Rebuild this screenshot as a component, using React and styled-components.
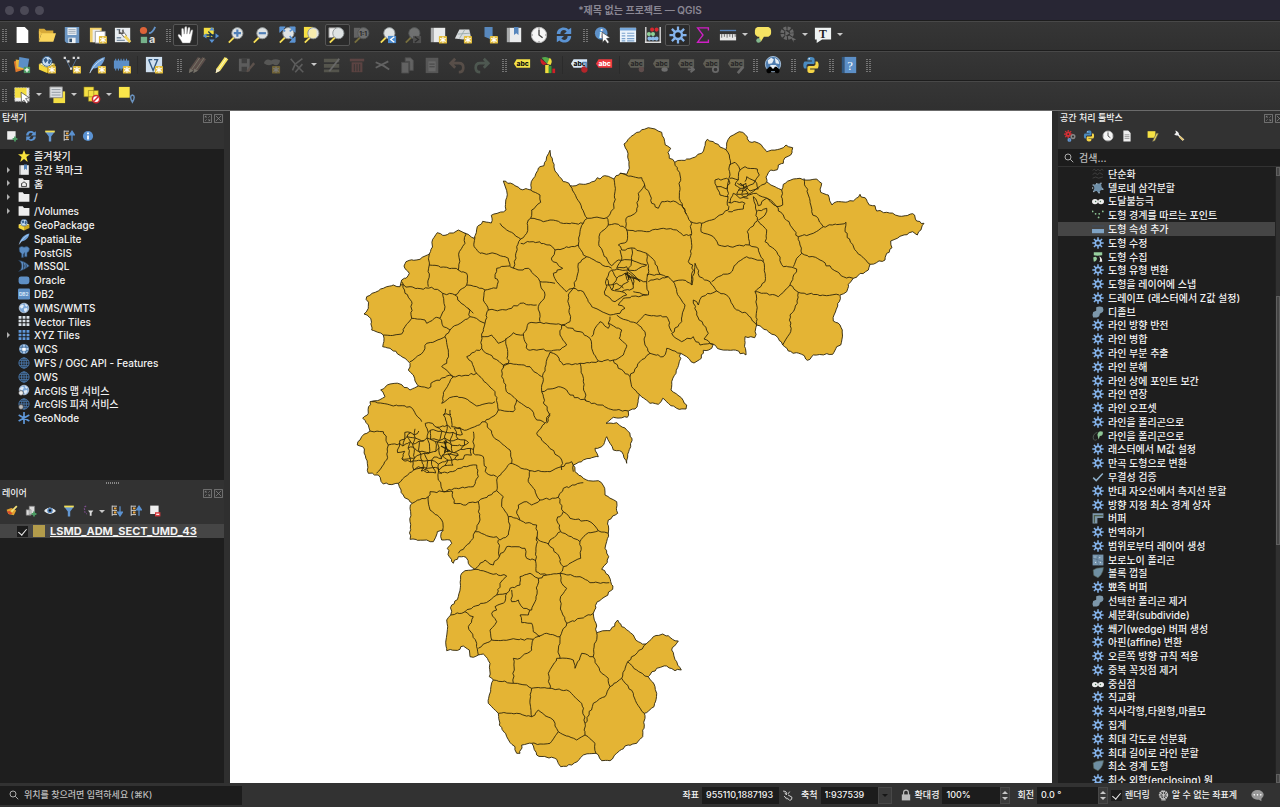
import React, { useState } from "react";
import styled, { createGlobalStyle } from "styled-components";

const GlobalStyle = createGlobalStyle`
  * {
    box-sizing: border-box;
  }

  body {
    margin: 0;
    background: #323232;
    color: #f2f2f2;
    font-family: Inter, "Noto Sans CJK KR", sans-serif;
    font-size: 10px;
    font-weight: 500;
    line-height: 14px;
    overflow: hidden;
  }

  button, input, select {
    font: inherit;
    color: inherit;
  }

  ul {
    list-style: none;
    margin: 0;
    padding: 0;
  }
`;

/* ---------- icons ---------- */

const Badge = ({ x = 11, y = 11 }) => (
  <g transform={`translate(${x} ${y})`}>
    <rect width="9" height="8.5" rx="1" fill="#e3bd3c" />
    <path
      d="M4.5 1v6.5M1.5 2.5l6 3.6M7.5 2.5l-6 3.6"
      stroke="#fff"
      strokeWidth="1.3"
    />
  </g>
);

const Lens = ({ children }) => (
  <>
    <path d="M2 18.5l6-6" stroke="#222" strokeWidth="3.4" />
    <path d="M2 18.5l6-6" stroke="#f3dc58" strokeWidth="2.2" />
    <circle cx="11.5" cy="8" r="6.2" fill="#dfe3e4" stroke="#8b9294" />
    {children}
  </>
);

const Tag = ({ fill, ink = "#111", children }) => (
  <>
    <path d="M1 8.5l3-5h15v9.500H4z" fill={fill} />
    <text
      x="4"
      y="11"
      fontSize="7.500"
      fontWeight="800"
      fontFamily="Inter, sans-serif"
      fill={ink}
    >
      abc
    </text>
    {children}
  </>
);

const Globe = ({ fill = "#7fa9d8", line = "#dfeaf6" }) => (
  <>
    <circle cx="10" cy="10" r="8" fill={fill} stroke={line} />
    <path
      d="M3 7l4-3 3 2-2 4-3 1zM12 3l4 3-2 2-2-2zM10 11l5-1 1 3-4 4-2-3z"
      fill={line}
    />
  </>
);

const WireGlobe = () => (
  <g fill="none" stroke="#4b79ae" strokeWidth="1.5">
    <circle cx="10" cy="10" r="8.5" />
    <ellipse cx="10" cy="10" rx="4" ry="8.5" />
    <path d="M10 1.500v17M1.500 10h17M3 5.500h14M3 14.500h14" />
  </g>
);

const Gear = ({ color = "#85b4ec" }) => (
  <g stroke={color} fill="none">
    <path
      d="M10 .5v19M.5 10h19M3.200 3.200l13.600 13.600M16.800 3.200L3.200 16.800"
      strokeWidth="2.500"
    />
    <circle cx="10" cy="10" r="4.400" strokeWidth="2.600" fill="#1e1e1e" />
  </g>
);

const Refresh = () => (
  <g fill="#5b93d3">
    <path d="M2 9C2 1 12 0 15 4l3-2v7h-8l3-3C10 3 6 5 6 9z" />
    <path d="M18 11c0 8-10 9-13 5l-3 2v-7h8l-3 3c3 3 7 1 7-3z" />
  </g>
);

const Funnel = () => (
  <>
    <path d="M2 3h16l-6 8v8H8v-8z" fill="#6397d2" />
    <path d="M2 1h16v3H2z" fill="#f1df58" />
  </>
);

const Python = () => (
  <>
    <path
      d="M10 1C6 1 6 2.500 6 5h5v1H3C1 7 1 13 3 14h2v-3c0-1 1-2 2-2h5c2 0 2-1 2-2V4c0-2-1-3-4-3z"
      fill="#4b8bc0"
    />
    <path
      d="M10 19c4 0 4-1.500 4-4H9v-1h8c2-1 2-7 0-8h-2v3c0 1-1 2-2 2H8c-2 0-2 1-2 2v3c0 2 1 3 4 3z"
      fill="#f5d547"
    />
    <circle cx="8" cy="3" r=".8" fill="#fff" />
  </>
);

const Pencil = ({ color = "#f6e45f" }) => (
  <>
    <path d="M4 14L13 1l4 2.500-9 13L3 19z" fill={color} />
    <path d="M6 15L15 2" stroke="#fffbd0" />
    <path d="M4 14l4 2.500L3 19z" fill="#f1ead0" />
  </>
);

const Cursor = () => (
  <path
    d="M9 7l9 6-4 1 3 4-2 1.500-3-4-2.500 3z"
    fill="#fff"
    stroke="#333"
    strokeWidth=".7"
  />
);

const Book = () => (
  <>
    <path d="M2 2h3v16H2z" fill="#a9abac" />
    <path d="M5 2h13v16H5z" fill="#e9ebec" />
  </>
);

const ListArrows = ({ up }) => (
  <>
    <path d="M2 2h8M2 9h8M2 16h8M2 1v17" stroke="#ddd" strokeWidth="1.500" />
    <path d="M5 4h4v3H5zM5 11h4v3H5z" fill="#eda73f" />
    <path
      d={up ? "M15 18V5M11 8l4-6 4 6z" : "M15 2v13M11 12l4 6 4-6z"}
      stroke="#5b93d3"
      strokeWidth="2"
      fill="#5b93d3"
    />
  </>
);

const Box = () => (
  <>
    <path d="M1 9l9-3 9 3-9 4z" fill="#fff0a0" />
    <path d="M1 9l9 4v6l-9-4z" fill="#f4d83e" />
    <path d="M19 9l-9 4v6l9-4z" fill="#c9a51c" />
    <circle cx="10" cy="6" r="5.500" fill="#c9def2" stroke="#37618f" />
    <path d="M6 4l3-2 2 3-3 3zM12 3l3 2-2 4-2-1z" fill="#37618f" />
  </>
);

const Feather = () => (
  <>
    <path d="M2 18C5 8 10 3 19 1c-1 7-6 12-13 13z" fill="#6ea0d8" />
    <path d="M2 19C6 11 11 6 17 3" stroke="#d6e6f7" fill="none" />
  </>
);

const Grid = ({ color }) => (
  <path
    d="M1 4h18M1 10h18M1 16h18"
    stroke={color}
    strokeWidth="4.500"
    strokeDasharray="4.800 1.800"
  />
);

const icons = {
  newProject: <path d="M4 1h9l4 4v14H4z" fill="#fff" />,
  open: (
    <>
      <path d="M1 3h6l2 2h8v4H1z" fill="#d8ab3a" />
      <path d="M1 17L4 8h16l-3 9.500H1z" fill="#fbd65d" />
      <path d="M1 5v12l3-9z" fill="#f1c54c" />
    </>
  ),
  save: (
    <>
      <path d="M2 1h16v18H4l-2-2z" fill="#6c96c2" />
      <path d="M5 2h10v8H5z" fill="#e8eef3" />
      <path d="M6 4h8M6 6h8M6 8h8" stroke="#98a6b3" />
      <path d="M6 13h8v6H6z" fill="#edf1f4" />
      <path d="M7 14h3v4H7z" fill="#34516f" />
    </>
  ),
  layout: (
    <>
      <path d="M1 2h13v5H6v11H1z" fill="#f0cf68" />
      <path d="M4 4h8v14H4z" fill="#eee" />
      <path d="M7 6h11v13H7z" fill="#fff" stroke="#999" />
      <Badge />
    </>
  ),
  layoutManager: (
    <>
      <path d="M1 2h17v16H1z" fill="#e9edf0" />
      <path d="M3 4h4M3 16h9M3 13h5" stroke="#7d91a4" strokeWidth="1.500" />
      <path d="M8 6l5 6" stroke="#555" strokeWidth="4" />
      <path d="M8 6l5 6" stroke="#fff" strokeWidth="2.500" />
      <path d="M12 11l6 7" stroke="#f1d35b" strokeWidth="3" />
      <path d="M6 4v4h4V4" stroke="#555" fill="none" strokeWidth="1.500" />
    </>
  ),
  style: (
    <>
      <circle cx="5" cy="5" r="4" fill="#dd6339" />
      <path d="M11 8q4 0 7-7" stroke="#6493c8" strokeWidth="2" fill="none" />
      <path d="M2 12h7v7H2z" fill="#76b28b" />
      <text
        x="11"
        y="19"
        fontSize="12"
        fontWeight="700"
        fontFamily="Inter, sans-serif"
        fill="#ddd"
      >
        a
      </text>
    </>
  ),
  hand: (
    <path
      d="M6 19c-1-3-5-7-5-9 1-2 3 0 4 2V4c0-2 2-2 2.500 0l.5 5 .5-7c.5-2 2.500-2 2.500 0v7l1-6c.5-2 2.500-2 2.500 0L14 9l1.500-4c1-1.500 2.500-1 2 1L16 14c0 2-1 3-1.500 5z"
      fill="#fff"
      stroke="#777"
      strokeWidth=".5"
    />
  ),
  panSelect: (
    <>
      <path d="M2 2h11v10H2z" fill="#f4df43" />
      <path
        d="M7 6l8 8M9 9v9M3 10h15"
        stroke="#19334f"
        strokeWidth="1.500"
      />
      <path
        d="M11 1l3 4H8zM11 19l3-4H8zM1 11l4-3v6zM19 11l-4-3v6z"
        fill="#5b93d3"
      />
    </>
  ),
  zoomIn: (
    <Lens>
      <path d="M7.500 8h8M11.500 4v8" stroke="#4f7fb7" strokeWidth="2.400" />
    </Lens>
  ),
  zoomOut: (
    <Lens>
      <path d="M7.500 8h8" stroke="#4f7fb7" strokeWidth="2.400" />
    </Lens>
  ),
  zoomFull: (
    <Lens>
      <path
        d="M2 1h6L2 7zM19 1h-6l6 6zM19 18h-6l6-6z"
        fill="#5b93d3"
        stroke="#5b93d3"
      />
      <path
        d="M4 3l4 3M17 3l-4 3M17 16l-4-5"
        stroke="#5b93d3"
        strokeWidth="1.800"
      />
    </Lens>
  ),
  zoomSelection: (
    <>
      <path d="M1 1h10v12H1z" fill="#f7df42" />
      <Lens>
        <path d="M7 5q4-4 8 0v7q-4 3-8 0z" fill="#f6ecae" />
      </Lens>
    </>
  ),
  zoomLayer: (
    <>
      <path d="M1 2h10v11H1z" fill="#eee" stroke="#888" />
      <Lens />
    </>
  ),
  zoomNative: (
    <>
      <path d="M1 2h7v11H1z" fill="#bbb" />
      <Lens>
        <text
          x="7"
          y="11"
          fontSize="7"
          fontWeight="800"
          fontFamily="Inter, sans-serif"
          fill="#222"
        >
          1:1
        </text>
      </Lens>
    </>
  ),
  zoomLast: (
    <Lens>
      <path d="M10 11h9v8h-9z" fill="#4a8bd0" />
      <path d="M17 12l-4 3 4 3" stroke="#fff" strokeWidth="1.500" fill="none" />
    </Lens>
  ),
  zoomNext: (
    <Lens>
      <path d="M10 11h9v8h-9z" fill="#888" />
      <path d="M12 12l4 3-4 3" stroke="#222" strokeWidth="1.500" fill="none" />
    </Lens>
  ),
  newMap: (
    <>
      <Book />
      <Badge />
    </>
  ),
  new3d: (
    <>
      <path d="M1 14L6 4h11l2 9-9 2z" fill="#dadddf" />
      <path d="M4 9l14-1M6 14l6-10" stroke="#9aa" />
      <Badge />
    </>
  ),
  newBookmark: (
    <>
      <path d="M5 1h9v16l-4-3-5-2z" fill="#5888bd" />
      <Badge />
    </>
  ),
  bookmarks: (
    <>
      <Book />
      <path d="M10 1h5v9l-2.500-2L10 10z" fill="#5686bc" />
    </>
  ),
  clock: (
    <>
      <circle cx="10" cy="10" r="8.500" fill="#f6f6f6" stroke="#bbb" />
      <path d="M10 4v6l4 3" stroke="#444" strokeWidth="1.500" fill="none" />
      <path d="M10 2v1M10 17v1M2 10h1M17 10h1" stroke="#333" />
    </>
  ),
  refresh: <Refresh />,
  identify: (
    <>
      <circle cx="8" cy="8" r="7" fill="#5e91c9" />
      <text
        x="5.500"
        y="13"
        fontSize="14"
        fontStyle="italic"
        fontWeight="700"
        fontFamily="Liberation Serif, serif"
        fill="#fff"
      >
        i
      </text>
      <Cursor />
    </>
  ),
  table: (
    <>
      <path d="M1 2h18v16H1z" fill="#eaf3fb" />
      <path d="M1 2h18v3H1z" fill="#78a9dc" />
      <path
        d="M3 8h4M9 8h8M3 11h4M9 11h8M3 14h4M9 14h8M3 16.500h4M9 16.500h8"
        stroke="#7ba3cd"
        strokeWidth="1.200"
      />
    </>
  ),
  abacus: (
    <>
      <path d="M2 1v17M18 1v17M1 18h18" stroke="#ddd" strokeWidth="1.500" />
      <g strokeWidth="4.500" strokeLinecap="round">
        <path d="M9 4h0M14 4h0" stroke="#d7282f" />
        <path d="M5.500 9h0M10 9h0" stroke="#8fd097" />
        <path d="M6 14h0M10 14h0M14 14h0" stroke="#8ab8e8" />
      </g>
    </>
  ),
  gear: <Gear />,
  sigma: (
    <path
      d="M16 5V2H4l6 8-6 8h12v-3"
      stroke="#cf1fc5"
      strokeWidth="1.500"
      fill="none"
    />
  ),
  ruler: (
    <>
      <path d="M1 5h18" stroke="#5480b8" strokeWidth="1.500" />
      <path d="M1 9h18v7H1z" fill="#e7e7e7" />
      <path
        d="M3 9v4M6 9v3M9 9v4M12 9v3M15 9v4M18 9v3"
        stroke="#555"
        strokeWidth=".9"
      />
    </>
  ),
  tips: (
    <>
      <path
        d="M4 1h12q3 1 3 4v3q0 3-3 4h-5l-3 5-3 1 1-6H4Q1 11 1 8V5q0-3 3-4z"
        fill="#f6e363"
      />
      <circle cx="5" cy="16" r="2.500" fill="#83b98e" />
    </>
  ),
  action: (
    <>
      <circle
        cx="9"
        cy="8"
        r="5.500"
        fill="none"
        stroke="#ccc"
        strokeWidth="4"
        strokeDasharray="3 1.300"
      />
      <path d="M7 5l5 3-5 3z" fill="#ccc" />
      <path d="M12 11l7 4-3 1 1 3z" fill="#ccc" />
    </>
  ),
  annotation: (
    <>
      <path d="M1 2h18v13H9l-6 4v-4H1z" fill="#eef2f2" />
      <text
        x="5.500"
        y="13"
        fontSize="13"
        fontWeight="700"
        fontFamily="Liberation Serif, serif"
        fill="#222"
      >
        T
      </text>
    </>
  ),
  dataSource: (
    <>
      <path d="M1 6l8-2 3 11-9 3z" fill="#e0792e" />
      <path d="M3 4l8 1 1 10-8-1z" fill="#e9b93c" />
      <path d="M7 1l11 2-2 12-10-3z" fill="#5c8fc7" />
      <path d="M12 12h7v7h-7z" fill="#4c9a63" />
      <path d="M15.500 13v5M13 15.500h5" stroke="#fff" strokeWidth="1.400" />
    </>
  ),
  newGpkg: (
    <>
      <Box />
      <Badge />
    </>
  ),
  newShape: (
    <>
      <path d="M3 3l6 12 6-12" stroke="#56749a" fill="none" />
      <path
        d="M2 2h0M6 6h0M9 14h0M17 2h0M12 2h0"
        stroke="#ddd"
        strokeWidth="2.500"
        strokeLinecap="square"
      />
      <Badge />
    </>
  ),
  newSpatialite: (
    <>
      <Feather />
      <Badge />
    </>
  ),
  memory: (
    <>
      <path d="M1 5h17v9H1z" fill="#5c8fc7" />
      <path
        d="M3 3v13M6 3v13M9 3v13M12 3v13M15 3v13"
        stroke="#5c8fc7"
        strokeWidth="1.200"
      />
      <Badge />
    </>
  ),
  virtual: (
    <>
      <path d="M1 1h18v17H1z" fill="#cfe0f0" />
      <path
        d="M4 4l5 12 5-12h-4M4 4h4"
        stroke="#31587f"
        strokeWidth="1.500"
        fill="none"
      />
      <Badge />
    </>
  ),
  edits: (
    <>
      <g transform="translate(-2 0)">
        <Pencil color="#a98276" />
      </g>
      <g transform="translate(3 0)">
        <Pencil color="#a98276" />
      </g>
    </>
  ),
  pencil: <Pencil />,
  saveEdits: (
    <>
      <path d="M1 3h12v14H1z" fill="#aaa" />
      <path d="M4 3h6v5H4zM4 12h6v5H4z" fill="#555" />
      <path d="M9 17l8-10 2 2-8 9z" fill="#a8897a" />
    </>
  ),
  addPolygon: (
    <>
      <path d="M1 8q2-6 8-3 5-3 10 0-2 8-8 4-5 3-10-1z" fill="#9a9a95" />
      <Badge x={10} y={11} />
    </>
  ),
  vertex: (
    <path
      d="M3 3l5 6-3 7M8 9l8-6M9 10l8 8M16 9l-8 9"
      stroke="#aaa"
      strokeWidth="1.800"
      fill="none"
    />
  ),
  multiEdit: (
    <>
      <path d="M1 3h17v4H1zM1 9h17v4H1zM1 15h17v3H1z" fill="#95957d" />
      <path d="M7 17L18 3" stroke="#ccc" strokeWidth="2" />
    </>
  ),
  trash: (
    <>
      <path d="M2 3h16v3H2z" fill="#a7635f" />
      <path d="M4 7v11h12V7" fill="#a7635f" />
      <path d="M7 9v8M10 9v8M13 9v8" stroke="#333" />
    </>
  ),
  cut: (
    <path
      d="M3 13l14-7M3 7l9 4 6 4"
      stroke="#bbb"
      strokeWidth="2"
      fill="none"
    />
  ),
  copy: (
    <path d="M4 7h8v12H4zM8 2h6l3 3v11h-4V6H8z" fill="#bbb" stroke="#777" />
  ),
  paste: (
    <>
      <path d="M3 2h14v17H3z" fill="#999" />
      <path d="M6 6h8v11H6z" fill="#ccc" />
      <path d="M7 9h6M7 12h6" stroke="#555" />
    </>
  ),
  undo: (
    <path
      d="M3 8h9q5 0 5 5t-5 5M8 3L3 8l5 5"
      stroke="#9c8070"
      strokeWidth="3"
      fill="none"
    />
  ),
  redo: (
    <path
      d="M17 8H8q-5 0-5 5t5 5M12 3l5 5-5 5"
      stroke="#7f9b87"
      strokeWidth="3"
      fill="none"
    />
  ),
  label: <Tag fill="#f4e248" />,
  diagram: (
    <>
      <path d="M4 2q5-2 9 1l-3 6z" fill="#55a94a" />
      <path d="M3 3l7 6-4 1q-4-2-3-7z" fill="#cf2027" />
      <path d="M13 2q4 3 1 8l-4-1z" fill="#f0dd3d" />
      <path d="M8 10h4v9H8z" fill="#f0dd3d" />
      <path d="M12 11h3v8h-3z" fill="#38963a" />
      <path d="M16 14h3v5h-3z" fill="#cf2027" />
    </>
  ),
  pinLabel: (
    <Tag fill="#d9e9f8">
      <circle cx="16" cy="15" r="3.500" fill="#b4252a" />
      <path d="M14 7h4v6" stroke="#4f7fb7" fill="none" strokeWidth="1.500" />
    </Tag>
  ),
  redLabel: <Tag fill="#ee3b40" ink="#fff" />,
  labelPin: (
    <Tag fill="#b0ae98">
      <circle cx="16" cy="15" r="3" fill="#b3807c" />
    </Tag>
  ),
  labelShow: (
    <Tag fill="#b0ae98">
      <ellipse cx="14" cy="15" rx="3.500" ry="2.500" fill="#ddd" />
    </Tag>
  ),
  labelMove: (
    <Tag fill="#b0ae98">
      <path d="M12 15h6M15 12l4 3-4 3" stroke="#ccc" strokeWidth="2" />
    </Tag>
  ),
  labelRotate: (
    <Tag fill="#b0ae98">
      <circle cx="15" cy="15" r="3" fill="none" stroke="#ccc" strokeWidth="2" />
    </Tag>
  ),
  labelEdit: (
    <Tag fill="#b0ae98">
      <path d="M12 19l6-7" stroke="#ccc" strokeWidth="3" />
    </Tag>
  ),
  metasearch: (
    <>
      <circle cx="10" cy="9" r="8.500" fill="#4f7db0" stroke="#a9c5e0" />
      <path
        d="M4 5l4-3 3 2-2 4-4 1zM12 2l4 3 1 4-4-1zM7 10l6 0 3 3-4 2-5-1z"
        fill="#e6eef6"
      />
      <path
        d="M4 19a3 3 0 0 1 0-5l2-2h2l1 2h2l1-2h2l2 2a3 3 0 0 1 0 5q-4 1-4-2h-4q0 3-4 2z"
        fill="#000"
      />
    </>
  ),
  python: <Python />,
  help: (
    <>
      <path d="M2 1h3v18H2z" fill="#31577f" />
      <path d="M5 1h13v18H5z" fill="#5c8fc7" />
      <text
        x="8"
        y="15"
        fontSize="14"
        fontFamily="Liberation Serif, serif"
        fill="#fff"
      >
        ?
      </text>
    </>
  ),
  select: (
    <>
      <path
        d="M2 2h16v15H2z"
        fill="#eee"
        stroke="#aaa"
        strokeDasharray="2 1"
      />
      <path d="M2 2h13v11H2z" fill="#f4df43" />
      <Cursor />
    </>
  ),
  selectValue: (
    <>
      <path d="M6 6h13v13H6z" fill="#f4df43" />
      <path d="M2 1h14v12H2z" fill="#dcdfe2" stroke="#888" />
      <path d="M4 4h10M4 7h10M4 10h10" stroke="#8b949d" />
    </>
  ),
  deselect: (
    <>
      <path
        d="M1 1h11v11H1zM6 5h11v12H6z"
        fill="#f4df43"
        stroke="#80711a"
        strokeWidth=".6"
      />
      <circle
        cx="14.500"
        cy="14.500"
        r="4"
        fill="#fff"
        stroke="#d12b33"
        strokeWidth="1.700"
      />
      <path d="M12 17l5-5" stroke="#d12b33" strokeWidth="1.700" />
    </>
  ),
  selectPlace: (
    <>
      <path d="M1 1h12v12H1z" fill="#f9e54a" />
      <path
        d="M16 18q-4-7 0-8 4 1 0 8z"
        fill="none"
        stroke="#6b93bf"
        strokeWidth="1.600"
      />
    </>
  ),
  addPanel: (
    <>
      <path d="M2 2h14v14H2z" fill="#eee" />
      <path d="M11 15h8M15 11v8" stroke="#4c9a63" strokeWidth="3" />
    </>
  ),
  funnel: <Funnel />,
  collapse: <ListArrows up />,
  expand: <ListArrows />,
  info: (
    <>
      <circle cx="10" cy="10" r="8.500" fill="#5b93d3" />
      <path d="M10 4v3M10 9v7" stroke="#fff" strokeWidth="3" />
    </>
  ),
  star: (
    <path
      d="M10 0l2.800 7H20l-6 4.800L16.200 20 10 15.200 3.800 20 6 11.800 0 7h7.200z"
      fill="#f8e23c"
    />
  ),
  home: (
    <>
      <path d="M1 2h7l2 3h9v13H1z" fill="#eee" />
      <path
        d="M5 12l5-4 5 4h-1v4H6v-4z"
        fill="none"
        stroke="#333"
        strokeWidth="1.500"
      />
    </>
  ),
  folder: <path d="M1 2h7l2 3h9v13H1z" fill="#eee" />,
  geopackage: <Box />,
  feather: <Feather />,
  postgis: (
    <path
      d="M2 3q4-4 8-1 6-3 9 2 0 6-4 7v7h-4v-7l-2 3v5H6v-6Q1 10 2 3z"
      fill="#5b8cc2"
      stroke="#2c4a6c"
    />
  ),
  mssql: (
    <path
      d="M1 1q5 2 5 9t-5 9q9-2 18-9Q12 2 1 1zM9 4q3 6 0 12M13 6q2 4 0 8"
      fill="#5b8cc2"
      stroke="#28405c"
    />
  ),
  oracle: <rect x="1" y="4" width="18" height="13" rx="4" fill="#5e8fc5" />,
  db2: (
    <>
      <rect y="1" width="20" height="18" rx="2" fill="#5e8fc5" />
      <text
        x="1.500"
        y="13"
        fontSize="8"
        fontWeight="700"
        fontFamily="Inter, sans-serif"
        fill="#dbe9f8"
      >
        DB2
      </text>
    </>
  ),
  globe: <Globe />,
  wcs: (
    <>
      <circle cx="10" cy="10" r="8" fill="#a9c9ec" />
      <path
        d="M2 7h16M2 13h16M7 2v16M13 2v16"
        stroke="#37618f"
        strokeWidth="1.500"
      />
      <path d="M7 8h6v5H7z" fill="#fff" />
    </>
  ),
  wire: <WireGlobe />,
  vectorTiles: <Grid color="#d9e0e6" />,
  xyz: <Grid color="#5f98da" />,
  arcMap: (
    <>
      <Globe />
      <circle cx="5" cy="15" r="4" fill="#eee" stroke="#333" />
    </>
  ),
  arcFeature: (
    <>
      <WireGlobe />
      <circle cx="5" cy="15" r="4" fill="#bbb" stroke="#333" />
    </>
  ),
  geonode: (
    <path
      d="M10 1v18M2 5.500l16 9M18 5.500l-16 9"
      stroke="#5f98da"
      strokeWidth="2.800"
      strokeLinecap="round"
    />
  ),
  brush: (
    <>
      <path d="M1 8l8-3 8 4-4 8-9-2z" fill="#e4a22f" />
      <path d="M1 11l5 5 5-2-5-4z" fill="#d94c2c" />
      <path d="M9 11l9-9" stroke="#f5e27b" strokeWidth="3" />
    </>
  ),
  group: (
    <>
      <path d="M2 8h8v9H2zM7 2h9v14H7z" fill="#ddd" stroke="#777" />
      <path d="M11 15h8M15 11v8" stroke="#4c9a63" strokeWidth="3" />
    </>
  ),
  eye: (
    <>
      <path d="M0 10q9-12 20 0-10 10-20 0z" fill="#e7ecef" />
      <circle cx="10" cy="9" r="4.500" fill="#4f7fb7" />
      <circle cx="10" cy="9" r="2" fill="#111" />
    </>
  ),
  expression: (
    <>
      <path
        d="M7 2Q2 3 5 9q-2 2 3 6"
        stroke="#7b4c8c"
        strokeWidth="2"
        fill="none"
        strokeDasharray="3 2"
      />
      <path d="M10 9h9l-3 4v5h-3v-5z" fill="#ddd" />
    </>
  ),
  removeLayer: (
    <>
      <path d="M2 1h14v14H2z" fill="#eee" />
      <path d="M10 12h9v7h-9z" fill="#d7393e" />
      <path d="M12 15.500h5" stroke="#fff" strokeWidth="2" />
    </>
  ),
  models: (
    <>
      <g stroke="#d72f35" fill="none">
        <circle cx="7" cy="7" r="3" strokeWidth="3" />
        <path
          d="M7 0v3M7 11v3M0 7h3M11 7h3M2 2l2 2M12 2l-2 2M2 12l2-2"
          strokeWidth="2"
        />
      </g>
      <circle
        cx="15"
        cy="11"
        r="3"
        fill="none"
        stroke="#888"
        strokeWidth="2.500"
      />
      <circle
        cx="9"
        cy="16.500"
        r="2"
        fill="none"
        stroke="#6397d2"
        strokeWidth="2.500"
      />
    </>
  ),
  page: (
    <>
      <path d="M4 1h8l4 4v14H4z" fill="#eee" />
      <path d="M6 8h8M6 11h8M6 14h8" stroke="#666" />
    </>
  ),
  editInPlace: (
    <>
      <path d="M1 2h13v11H1z" fill="#f6e245" />
      <path d="M9 19l7-14 3 1-6 12z" fill="#e9d45a" stroke="#555" />
    </>
  ),
  wrench: (
    <>
      <path d="M4 1l1 4-3 2q3 3 6 2l8 9 3-2-9-8q0-5-6-7z" fill="#eee" />
      <path d="M11 11l6 6" stroke="#e0c26c" strokeWidth="3" />
    </>
  ),
  simplify: (
    <path
      d="M1 4l3-2 3 3 3-3 3 3 3-3 3 2M1 11l4-3 4 3 4-3 5 3M1 17l5-2 5 2 7-2"
      stroke="#555"
      fill="none"
    />
  ),
  delaunay: (
    <>
      <path d="M2 5l6-2 7-1 1 6 3 4-5 2-3 5-3-4-6 1 2-6z" fill="#6f8fa8" />
      <path
        d="M2 5h0M8 3h0M15 2h0M18 12h0M12 18h0M3 16h0M1 10h0"
        stroke="#a9bccb"
        strokeWidth="2.500"
        strokeLinecap="round"
      />
    </>
  ),
  centroid: (
    <>
      <ellipse cx="5" cy="11" rx="5" ry="4.500" fill="#eee" />
      <ellipse cx="15" cy="11" rx="5" ry="4.500" fill="#eee" />
      <path
        d="M6 11h0M14 11h0"
        stroke="#48755a"
        strokeWidth="2.500"
        strokeLinecap="round"
      />
    </>
  ),
  points: (
    <path
      d="M1 4h0M6 8h0M11 14h0M12 8h0M18 4h0"
      stroke="#8ec796"
      strokeWidth="3"
      strokeLinecap="round"
    />
  ),
  measure: (
    <>
      <path d="M0 10h20v7H0z" fill="#7fa3c5" />
      <path d="M0 5h20" stroke="#3d536b" />
    </>
  ),
  collect: (
    <>
      <path d="M3 2h14v5l-8 1-6-1z" fill="#97cf9e" />
      <path d="M2 11q5-3 6 1t-5 6z" fill="#97cf9e" />
      <path d="M12 9q5 1 5 9h-5q3-4 0-9z" fill="#eee" />
    </>
  ),
  dissolve: (
    <path
      d="M7 2q6-2 11 0 2 4 0 8l-5 3q0 5-5 6H2q-2-5 0-9l5-2z"
      fill="#7d97aa"
    />
  ),
  polygonize: (
    <>
      <path d="M9 8q2-8 9-5 1 7-5 7l-2 6z" fill="#8ec796" />
      <path d="M9 4Q2 6 2 13q1 6 6 3" stroke="#6a7c70" fill="none" />
    </>
  ),
  check: (
    <path d="M2 11l5 5L18 4" stroke="#8fb0cb" strokeWidth="2.500" fill="none" />
  ),
  buffer: (
    <>
      <path d="M1 2h18v8H9v9H1z" fill="#7d97aa" />
      <path d="M4 18V6h14" stroke="#4d5d4a" fill="none" strokeWidth="2" />
    </>
  ),
  voronoi: (
    <>
      <path d="M1 1h18v18H1z" fill="#7795ad" />
      <path d="M1 7l7 2 3-8M8 9l3 10M8 9l11 4" stroke="#506a80" fill="none" />
      <path
        d="M5 5h0M13 6h0M6 14h0M14 14h0"
        stroke="#cfdbe4"
        strokeWidth="2"
        strokeLinecap="round"
      />
    </>
  ),
  hull: (
    <path
      d="M2 5l6-3 11-1q0 6-4 12l-5 5-7-4z"
      fill="#6f8fa2"
      stroke="#55675c"
    />
  ),
  lock: (
    <>
      <path
        d="M6 10V6q0-4 4-4t4 4v4"
        stroke="#bbb"
        strokeWidth="2"
        fill="none"
      />
      <path d="M3 9h14v10H3z" fill="#bdbdbd" />
    </>
  ),
  extents: (
    <path
      d="M2 2q8 0 6 7L5 5M11 9l7 4q1 5-4 6l-5-5M4 11l5 6M14 3l-3 4"
      stroke="#ddd"
      strokeWidth="1.700"
      fill="none"
    />
  ),
  crs: (
    <g fill="none" stroke="#ccc">
      <circle cx="10" cy="9" r="7" strokeWidth="3" strokeDasharray="3 1" />
      <path d="M3 9h14M10 2v14M5 5l10 9M5 14l10-9" strokeWidth="1.500" />
      <path d="M6 18h8" strokeWidth="2" />
    </g>
  ),
  bubble: (
    <>
      <ellipse cx="10" cy="9" rx="9.500" ry="7.500" fill="#999" />
      <path d="M10 15l6-1v5z" fill="#999" />
      <path
        d="M5 9h0M10 9h0M15 9h0"
        stroke="#fff"
        strokeWidth="2.500"
        strokeLinecap="round"
      />
    </>
  ),
  search: (
    <>
      <circle
        cx="8"
        cy="8"
        r="6"
        fill="none"
        stroke="#bbb"
        strokeWidth="1.800"
      />
      <path d="M12.500 12.500l6 6" stroke="#bbb" strokeWidth="1.800" />
    </>
  ),
  float: (
    <path
      d="M1 1h18v18H1zM5 5l3 3M15 5l-3 3M5 15l3-3M15 15l-3-3M8 5H5v3M12 15h3v-3"
      stroke="#8c8c8c"
      strokeWidth="1.600"
      fill="none"
    />
  ),
  close: (
    <path
      d="M1 1h18v18H1zM4 4l12 12M16 4L4 16"
      stroke="#8c8c8c"
      strokeWidth="1.600"
      fill="none"
    />
  ),
};

const Svg = styled.svg`
  display: block;
  flex: none;
  width: ${({ $size }) => $size}px;
  height: ${({ $size }) => $size}px;
`;

const Icon = ({ name, size = 18 }) => (
  <Svg $size={size} viewBox="0 0 20 20" aria-hidden="true">
    {icons[name]}
  </Svg>
);

/* ---------- window and toolbars ---------- */

const Window = styled.div`
  display: flex;
  flex-direction: column;
  height: 100vh;
  background: #323232;
`;

const TitleBar = styled.header`
  display: grid;
  grid-template-columns: 60px 1fr 60px;
  align-items: center;
  flex: none;
  height: 20px;
  background: #282634;
`;

const Lights = styled.div`
  display: flex;
  gap: 6px;
  padding-left: 5px;
`;

const Light = styled.span`
  width: 9px;
  height: 9px;
  border-radius: 50%;
  background: #4b4956;
`;

const WindowTitle = styled.h1`
  margin: 0;
  color: #8a8793;
  font-size: 10px;
  font-weight: 600;
  line-height: 20px;
  text-align: center;
`;

const Toolbar = styled.div`
  display: flex;
  align-items: center;
  flex: none;
  height: 30px;
  padding-bottom: 2px;
  border-top: 1px solid #1d1d1d;
  box-shadow: inset 0 1px #484848;
  background: linear-gradient(#363636, #303030);
`;

const Handle = styled.span`
  flex: none;
  width: 5px;
  height: 14px;
  margin: 0 2px 0 ${({ $before = 6 }) => $before}px;
  background: repeating-linear-gradient(#323232 0 1px, transparent 1px 2px),
    linear-gradient(90deg, #757575 0 2px, transparent 2px 3px, #757575 3px 5px);
`;

const ToolGroup = styled.div`
  display: flex;
  justify-content: space-between;
  flex: none;
  width: ${({ $width }) => ($width ? `${$width}px` : "auto")};
`;

const ToolButton = styled.button`
  display: flex;
  align-items: center;
  justify-content: center;
  width: ${({ $narrow }) => ($narrow ? 19 : 25)}px;
  height: 22px;
  padding: 0;
  border: 1px solid ${({ $pressed }) => ($pressed ? "#555" : "transparent")};
  border-radius: 2px;
  background: ${({ $pressed }) => ($pressed ? "#2b2b2b" : "none")};

  &:disabled svg {
    opacity: 0.35;
  }
`;

const MenuArrow = styled.span`
  align-self: center;
  width: 0;
  margin: 0 2px;
  border: 3px solid transparent;
  border-top-color: #c8c8c8;
  border-bottom: 0;
`;

const Divider = styled.span`
  width: 1px;
  margin: 2px 3px;
  background: #2b2b2b;
`;

const mainTools = [
  {
    before: 2,
    width: 152,
    tools: ["newProject", "open", "save", "layout", "layoutManager", "style"],
  },
  {
    before: 5,
    width: 404,
    tools: [
      "hand*",
      "panSelect",
      "zoomIn",
      "zoomOut",
      "zoomFull",
      "zoomSelection",
      "zoomLayer*",
      "zoomNative-",
      "zoomLast",
      "zoomNext-",
      "newMap",
      "new3d",
      "newBookmark",
      "bookmarks",
      "clock",
      "refresh",
    ],
  },
  {
    before: 6,
    tools: [
      "identify",
      "table",
      "abacus",
      "gear*",
      "sigma",
      "ruler",
      "v",
      "tips",
      "action-",
      "v",
      "annotation",
      "v",
    ],
  },
];

const layerTools = [
  {
    before: 2,
    tools: [
      "dataSource",
      "newGpkg",
      "newShape",
      "newSpatialite",
      "memory",
      "|",
      "virtual",
    ],
  },
  {
    before: 11,
    tools: [
      "edits-",
      "pencil",
      "saveEdits-",
      "addPolygon-",
      "vertex-",
      "v",
      "multiEdit-",
      "trash-",
      "cut-",
      "copy-",
      "paste-",
      "undo-",
      "redo-",
    ],
  },
  {
    before: 8,
    tools: [
      "label",
      "diagram",
      "|",
      "pinLabel",
      "redLabel",
      "|",
      "labelPin-",
      "labelShow-",
      "labelMove-",
      "labelRotate-",
      "labelEdit-",
    ],
  },
  { before: 5, tools: ["metasearch"] },
  { before: 6, tools: ["python"] },
  { before: 6, tools: ["help"] },
  { before: 5, tools: [] },
];

const selectionTools = [
  {
    before: 2,
    tools: ["select", "v", "selectValue", "v", "deselect", "v", "selectPlace"],
  },
];

// "*" marks a pressed tool, "-" a disabled one, "v" a menu arrow, "|" a divider
const Tools = ({ tools, size, narrow }) =>
  tools.map((tool, index) => {
    if (tool === "v") return <MenuArrow key={index} />;
    if (tool === "|") return <Divider key={index} />;
    const name = tool.replace(/[*-]/, "");
    return (
      <ToolButton
        key={index}
        aria-label={name}
        $narrow={narrow}
        $pressed={tool.endsWith("*")}
        disabled={tool.endsWith("-")}
      >
        <Icon name={name} size={size} />
      </ToolButton>
    );
  });

const ToolbarRow = ({ groups }) => (
  <Toolbar role="toolbar">
    {groups.map(({ before, width, tools }, index) => (
      <React.Fragment key={index}>
        <Handle $before={before} />
        <ToolGroup $width={width}>
          <Tools tools={tools} />
        </ToolGroup>
      </React.Fragment>
    ))}
  </Toolbar>
);

/* ---------- docks ---------- */

const Workspace = styled.main`
  display: grid;
  grid-template-columns: 230px 1fr 228px;
  flex: 1;
  min-height: 0;
  border-top: 1px solid #6b6b6b;
`;

const Side = styled.aside`
  display: flex;
  flex-direction: column;
  min-width: 0;
  min-height: 0;
  overflow: hidden;
  border-right: ${({ $right }) => ($right ? "0" : "6px solid #2f2f2f")};
  border-left: ${({ $right }) => ($right ? "6px solid #2b2b2b" : "0")};
`;

const Dock = styled.section`
  display: flex;
  flex-direction: column;
  flex: ${({ $grow }) => ($grow ? "1" : "none")};
  min-height: 0;
  height: ${({ $height }) => ($height ? `${$height}px` : "auto")};
`;

const DockTitle = styled.header`
  display: flex;
  align-items: center;
  flex: none;
  gap: 2px;
  height: 14px;
  padding: 0 1px 0 2px;
  margin-right: ${({ $flush }) => ($flush ? -5 : 0)}px;

  & h2 {
    flex: 1;
    margin: 0;
    font-size: 9px;
    font-weight: 500;
    line-height: 12px;
  }

  & button {
    padding: 0;
    border: 0;
    background: none;
  }
`;

const DockTools = styled.div`
  display: flex;
  align-items: center;
  flex: none;
  height: 24px;
  padding: 0 0 2px 2px;
`;

const Splitter = styled.div`
  flex: none;
  height: 6px;
  background: repeating-linear-gradient(90deg, #888 0 1px, transparent 1px 2px)
    center / 13px 2px no-repeat;
`;

const ListPane = styled.div`
  flex: 1;
  min-height: 0;
  overflow: hidden;
  background: #1e1e1e;
`;

const Tree = styled.ul`
  display: grid;
  grid-auto-rows: 1fr;
  height: ${({ $height }) => $height}px;
`;

const TreeRow = styled.li`
  display: flex;
  align-items: center;
  gap: 4px;
  min-height: 0;
  padding-left: ${({ $indent }) => $indent}px;
  background: ${({ $selected }) => ($selected ? "#454545" : "none")};
  white-space: nowrap;
`;

const Expander = styled.span`
  width: 3px;
  margin-right: 4px;
  border: 3px solid transparent;
  border-left-color: ${({ $open }) => ($open ? "#b0b0b0" : "transparent")};
  border-right: 0;
`;

const sources = [
  ["star", "즐겨찾기"],
  ["bookmarks", "공간 북마크", true],
  ["home", "홈", true],
  ["folder", "/", true],
  ["folder", "/Volumes", true],
  ["geopackage", "GeoPackage"],
  ["feather", "SpatiaLite"],
  ["postgis", "PostGIS"],
  ["mssql", "MSSQL"],
  ["oracle", "Oracle"],
  ["db2", "DB2"],
  ["globe", "WMS/WMTS"],
  ["vectorTiles", "Vector Tiles"],
  ["xyz", "XYZ Tiles", true],
  ["wcs", "WCS"],
  ["wire", "WFS / OGC API - Features"],
  ["wire", "OWS"],
  ["arcMap", "ArcGIS 맵 서비스"],
  ["arcFeature", "ArcGIS 피처 서비스"],
  ["geonode", "GeoNode"],
];

const Header = ({ title, flush }) => (
  <DockTitle $flush={flush}>
    <h2>{title}</h2>
    <button aria-label="float">
      <Icon name="float" size={9} />
    </button>
    <button aria-label="close">
      <Icon name="close" size={9} />
    </button>
  </DockTitle>
);

const Browser = () => (
  <Dock $height={369}>
    <Header title="탐색기" />
    <DockTools>
      <Tools
        narrow
        size={12}
        tools={["addPanel", "refresh", "funnel", "collapse", "info"]}
      />
    </DockTools>
    <ListPane>
      <Tree $height={276}>
        {sources.map(([icon, name, open]) => (
          <TreeRow key={name} $indent={7}>
            <Expander $open={open} />
            <Icon name={icon} size={12} />
            {name}
          </TreeRow>
        ))}
      </Tree>
    </ListPane>
  </Dock>
);

const LayerRow = styled.label`
  display: flex;
  align-items: center;
  gap: 5px;
  height: 14px;
  padding-left: 17px;
  background: #454545;
  font-size: 11px;
  font-weight: 700;
  text-decoration: underline;
`;

const Tick = styled.input`
  appearance: none;
  display: grid;
  place-content: center;
  flex: none;
  width: 11px;
  height: 11px;
  margin: 0;
  background: #1c1c1c;

  &:checked::before {
    content: "";
    width: 4px;
    height: 7px;
    border: solid #eee;
    border-width: 0 1px 1px 0;
    transform: rotate(40deg);
  }
`;

const Swatch = styled.span`
  width: 12px;
  height: 12px;
  background: #b39c4b;
`;

const Layers = () => (
  <Dock $grow>
    <Header title="레이어" />
    <DockTools>
      <Tools
        narrow
        size={12}
        tools={[
          "brush",
          "group",
          "eye",
          "funnel",
          "expression",
          "v",
          "expand",
          "collapse",
          "removeLayer",
        ]}
      />
    </DockTools>
    <ListPane>
      <LayerRow>
        <Tick type="checkbox" defaultChecked />
        <Swatch />
        LSMD_ADM_SECT_UMD_43
      </LayerRow>
    </ListPane>
  </Dock>
);

const algorithms = [
  ["단순화", "simplify"],
  ["델로네 삼각분할", "delaunay"],
  ["도달불능극", "centroid"],
  ["도형 경계를 따르는 포인트", "points"],
  ["도형 속성 추가", "measure"],
  ["도형 수정"],
  ["도형 수집", "collect"],
  ["도형 유형 변환"],
  ["도형을 레이어에 스냅"],
  ["드레이프 (래스터에서 Z값 설정)"],
  ["디졸브", "dissolve"],
  ["라인 방향 반전"],
  ["라인 병합"],
  ["라인 부분 추출"],
  ["라인 분해"],
  ["라인 상에 포인트 보간"],
  ["라인 연장"],
  ["라인 오프셋"],
  ["라인을 폴리곤으로"],
  ["라인을 폴리곤으로", "polygonize"],
  ["래스터에서 M값 설정"],
  ["만곡 도형으로 변환"],
  ["무결성 검증", "check"],
  ["반대 자오선에서 측지선 분할"],
  ["방향 지정 최소 경계 상자"],
  ["버퍼", "buffer"],
  ["번역하기"],
  ["범위로부터 레이어 생성"],
  ["보로노이 폴리곤", "voronoi"],
  ["볼록 껍질", "hull"],
  ["뾰족 버퍼"],
  ["선택한 폴리곤 제거", "dissolve"],
  ["세분화(subdivide)"],
  ["쐐기(wedge) 버퍼 생성"],
  ["아핀(affine) 변환"],
  ["오른쪽 방향 규칙 적용"],
  ["중복 꼭짓점 제거"],
  ["중심점", "centroid"],
  ["직교화"],
  ["직사각형,타원형,마름모"],
  ["집계"],
  ["최대 각도로 선분화"],
  ["최대 길이로 라인 분할"],
  ["최소 경계 도형", "hull"],
  ["최소 외함(enclosing) 원"],
];

const SearchBox = styled.label`
  display: flex;
  align-items: center;
  flex: none;
  gap: 5px;
  height: ${({ $height }) => $height}px;
  padding-left: 6px;
  background: #1c1c1c;

  & input {
    flex: 1;
    min-width: 0;
    padding: 0;
    border: 0;
    outline: 0;
    background: none;
  }

  & input::placeholder {
    color: #bdbdbd;
    opacity: 1;
  }
`;

const Scroller = styled.div`
  display: grid;
  grid-template-columns: 1fr 5px;
  flex: 1;
  min-height: 0;
  margin-top: 1px;
`;

const Track = styled.div`
  display: grid;
  grid-template-rows: 9px 120px 249px 1fr 9px;
  overflow: hidden;
  border-left: 1px solid #222;
  background: #303030;

  & > :nth-child(odd) {
    border: 1px solid #606060;
    background: #454545;
  }
`;

const Toolbox = () => (
  <Dock $grow>
    <Header title="공간 처리 툴박스" flush />
    <DockTools>
      <Tools
        narrow
        size={12}
        tools={[
          "models",
          "python",
          "clock",
          "page",
          "|",
          "editInPlace",
          "|",
          "wrench",
        ]}
      />
    </DockTools>
    <SearchBox $height={17}>
      <Icon name="search" size={10} />
      <input aria-label="검색" placeholder="검색..." />
    </SearchBox>
    <Scroller>
      <ListPane>
        <Tree $height={620}>
          {algorithms.map(([name, icon = "gear"], index) => (
            <TreeRow key={index} $indent={34} $selected={index === 4}>
              <Icon name={icon} size={12} />
              {name}
            </TreeRow>
          ))}
        </Tree>
      </ListPane>
      <Track>
        <span />
        <i />
        <span />
        <i />
        <span />
      </Track>
    </Scroller>
  </Dock>
);

/* ---------- map ---------- */

const MapSvg = styled.svg`
  display: block;
  width: 100%;
  height: 100%;
  min-height: 0;
  background: #fff;
`;

const sheet = (x0, y0) => (points) =>
  points
    .trim()
    .split(/\s+/)
    .map((pair) => {
      const [x, y] = pair.split(",").map(Number);
      return [x0 + x / 3, y0 + y / 3];
    });

const north = sheet(500, 115);
const west = sheet(350, 230);
const middle = sheet(430, 150);
const south = sheet(350, 440);

const noise = (x, y) => {
  const n = Math.sin(x * 12.9898 + y * 78.233) * 43758.5453;
  return n - Math.floor(n) - 0.5;
};

// Breaks long edges into short wandering ones, the way surveyed borders run
const roughen = (points) => {
  const out = [points[0]];
  for (let i = 1; i < points.length; i++) {
    const [ax, ay] = points[i - 1];
    const [bx, by] = points[i];
    const length = Math.hypot(bx - ax, by - ay);
    const steps = Math.max(1, Math.round(length / 3));
    for (let s = 1; s < steps; s++) {
      const x = ax + ((bx - ax) * s) / steps;
      const y = ay + ((by - ay) * s) / steps;
      out.push([x + noise(x, y) * 2, y + noise(y, x) * 2]);
    }
    out.push([bx, by]);
  }
  return out;
};

const toPath = (points, closed) =>
  `M${roughen(points)
    .map(([x, y]) => `${x.toFixed(1)} ${y.toFixed(1)}`)
    .join("L")}${closed ? "Z" : ""}`;

const outline = [
  ...north(`10,198 40,208 60,222 92,225 94,200 108,175 120,155 132,152 140,125 150,106 158,140
    165,168 185,192 210,212 250,208 285,198 292,188 300,192 308,184 325,184 342,192 348,182
    360,175 380,178 388,160 384,115 372,87 400,60 425,44 445,38 465,42 485,52 492,70 496,90
    512,100 504,112 508,130 524,142 545,136 570,132 605,115 622,73 645,85 660,96 678,104
    684,74 700,60 718,50 735,58 748,80 775,84 800,110 850,98 858,90 878,98 872,120 855,128
    850,145 835,150 832,164 812,165 798,186 800,200 830,218 845,225 850,208 880,192 900,190
    930,195 950,192 965,205 962,232 985,240 996,270 1010,260 1060,258 1080,238 1100,255
    1108,270 1125,272 1130,288 1160,292 1205,304 1238,296 1250,318 1272,325 1252,360 1238,350
    1200,364 1172,378 1176,398 1160,415 1155,435 1110,448 1105,465 1060,490 1045,508 1040,530
    1020,540 1018,560 1002,600 1000,618 1020,630 1027,645 1022,690 1010,695 998,718 940,720
    922,736 905,718 865,708 848,690 825,660 800,645 770,630 764,668 735,665 738,720 700,705
    660,703 640,688 635,700 610,706 604,730 582,744 560,725 542,715 538,740 528,775 515,800
    513,825 540,845 560,870 558,882 530,880 505,865 488,850 475,868 450,865 418,838 412,870
    405,882 385,888`),
  ...west(`835,545 832,562 790,562 768,580 800,578 832,602 846,625 842,650 836,665 830,700
    815,665 790,660 780,640 770,620 755,650 735,655 745,680 700,690 670,705 675,725 700,745`),
  ...south(`710,120 745,122 764,145 765,165 800,185 803,220 775,240 775,280 765,325 776,350
    768,372 755,388 775,405 782,425 788,448 765,470 742,485 730,520 738,550 740,578 780,572
    803,540 815,560 850,585 865,605 888,612 910,590 938,582 985,603 965,630 980,665 994,690
    975,692 950,678 920,685 895,710 915,740 920,760 912,800 883,820 885,835 878,890 860,910
    825,918 800,940 780,962 755,962 738,940 700,945 665,975 632,980 620,958 560,945 545,910
    515,915 510,940 500,940 495,920 470,890 448,855 445,820 415,790 418,765 430,720 418,710
    420,670 400,642 385,645 370,652 360,650 358,630 340,618 330,628 290,632 288,600 293,560
    290,540 302,525 305,495 325,470 335,400 345,392 375,388 355,370 348,352 325,350 310,370
    298,350 292,325 305,310 300,300 275,300 272,290 280,270 262,275 250,305 230,300 180,298
    180,245 180,205 187,190 160,165 148,140 145,130 100,132 85,105 55,100`),
  ...west(`52,700 38,650 22,645 35,620 60,603 55,585 38,565 55,550 60,515 82,512 105,500
    92,480 120,462 150,462 180,480 205,468 190,435 175,420 180,400 165,385 120,355 98,350
    100,315 65,300 62,265 42,252 55,235 50,200 100,175 130,165 150,170 155,150 168,145
    178,130 162,108 168,95 210,88 238,72`),
  ...middle(`3,298 8,268 22,248 45,256 75,246 85,240 105,250 132,265 142,230 158,214 184,219
    184,196 212,186 228,180 230,122`),
];

const borders = [
  ...[
    "92,225 120,240 122,262 95,285 92,310",
    "0,325 20,345 62,372 80,355 85,315 92,310 130,320 150,315 200,325 250,325 262,310 245,280 230,250 210,212",
    "262,310 320,308 342,280 345,230 342,192",
    "320,308 325,330 300,355 296,385 310,415 322,435 335,452",
    "325,330 355,328 375,340",
    "360,175 400,185 425,188 434,210 415,235 410,290 378,310 380,345 380,380 355,390 365,405",
    "434,210 450,240 455,265 475,280 485,260 520,258 545,270 560,298",
    "524,142 540,180 538,250 555,290 572,320 605,325 635,315 685,285",
    "380,345 440,350 490,340 530,345 550,362 575,358",
    "572,320 575,400 565,440 578,450 576,510",
    "605,325 603,350 640,365 655,390 690,395 748,390 742,350 772,318 770,290 760,245",
    "748,390 775,400 790,440 740,425 715,440 690,475 655,485 635,500",
    "790,440 795,500 765,530 825,540 835,545 870,510 890,462 850,455 830,410 795,380 800,345 775,318",
    "685,285 682,225 690,180 688,120 678,104",
    "802,250 850,300 895,365 905,415 890,430 880,455",
    "845,225 848,270 830,275 802,250 770,235 740,240",
    "912,190 925,240 935,290 970,335",
    "895,365 940,355 970,335 1038,322 1035,350 1070,410 1110,448",
    "905,415 960,435 1030,485 1060,490",
    "870,510 895,532 960,542 1018,540",
    "895,532 892,565 870,600 872,650 848,690",
    "765,530 770,570 770,630",
    "576,510 585,445 598,485 630,500 650,528 680,540 710,585 740,595 770,630",
    "650,528 605,545 595,570 580,555 590,600 610,630 625,655 612,672 640,688",
    "445,500 505,485 520,500 548,495 576,510",
    "520,500 530,530 555,570 545,620 515,655 545,680 580,665 600,690 640,688",
    "440,415 465,440 480,478 440,480",
    "480,478 505,485",
    "515,650 500,605 435,598 410,625 360,608 350,600",
    "410,625 435,650 435,690 450,715 490,725 500,700 542,715",
    "450,715 420,740 390,785 355,760 340,735",
    "390,785 395,815 418,838",
    "250,325 240,350 235,390 250,420 260,425 290,440 335,460",
    "62,372 50,395 48,430 40,460",
    "62,385 100,380 150,390 165,405 235,390",
    "165,405 155,435 188,460 160,475 170,500 200,530 220,520 235,470 235,445 260,425",
    "220,520 205,540 210,620 185,630",
    "220,520 250,530 275,575 330,600 360,595 375,580 355,570 370,550 440,540",
    "30,455 60,465 85,460 115,490 120,500 165,505",
    "120,500 135,540 115,575 120,620",
    "-36,585 0,585 35,580 60,565 110,570",
    "85,625 120,622 185,630 180,660 200,690 180,705 85,705 75,680 70,655 85,625",
    "185,630 240,650 270,670 275,700 295,738 240,745 190,750 170,720 150,712",
    "275,665 285,640 300,620 325,640 330,605",
    "325,625 365,645 358,670 380,690 370,720 340,735 295,738",
    "8,755 30,745 90,755 125,785",
    "150,712 130,775 125,830 135,870 150,900 140,925",
    "240,745 250,800 258,858",
    "125,830 150,822 175,815 200,825 210,840 258,858 300,870 340,885 385,888",
    // town wards
    "688,150 705,142 720,165 715,195 690,190",
    "645,195 680,190 690,205 680,222 650,215 645,195",
    "650,215 660,240 685,245",
    "685,262 710,260 735,265 730,282 685,290",
    "720,165 735,155 772,162 778,180 765,198 740,185 735,200",
    "715,195 705,210 720,220 710,238 740,245 765,225 800,200",
    "720,220 750,210 765,198 775,222 750,228 720,205 745,235 725,238 730,208",
    "712,205 725,212 738,205 742,218 730,228 715,225",
    "690,265 700,235 720,250 745,250",
    "760,245 775,272 800,250",
    "770,290 800,280 795,300 775,315",
    "365,405 405,400 440,415 445,460 440,500",
    "335,452 355,435 395,435 440,450",
    "395,400 395,435 385,465 335,465 320,490 335,525",
    "385,465 410,465 440,450",
    "335,465 350,490 375,475 400,490 440,500 445,540 400,530",
    "350,490 335,525 365,530 400,520 400,490",
    "375,475 385,500 365,515 345,525",
    "320,490 315,540 345,560 380,540 365,530",
    "380,470 420,500 385,480 400,510",
    "360,405 365,435 350,460 380,455 410,490",
    "320,510 350,505 370,520",
  ].map(north),
  ...[
    "345,8 345,40 328,65 325,120 350,130 350,165",
    "375,22 372,50 390,70 440,72 475,85 480,108 440,115 435,145 445,155 440,175 405,180 380,170 350,165",
    "238,72 238,105 290,112 325,120",
    "238,105 235,170",
    "150,165 180,170 220,178 245,172 278,190 315,195 350,165",
    "155,155 165,190 185,215 185,265 165,290 155,312 100,315",
    "185,265 225,270 230,280 260,262 270,265 285,230 278,190",
    "270,265 280,290 300,300 360,260 355,235 330,215 315,195",
    "405,180 400,210 415,240 405,280 370,262 360,260",
    "355,235 370,250",
    "300,300 285,320 230,340 220,365 180,395",
    "285,320 295,360 290,400 275,410 310,440 380,430 365,395 350,380 395,355",
    "405,280 395,320 395,355 430,385 460,405 475,400 470,350 468,325",
    "395,320 425,315 445,340 470,325 490,308 520,315",
    "460,405 455,440 475,490 500,510 490,545 445,540 435,485 410,460 380,430",
    "205,468 235,475 250,455 300,435 310,440 285,480 275,520 310,500 345,505 380,528 435,515",
    "445,540 440,550 405,575 350,600 305,590 300,540",
    "65,515 130,528 180,530 215,575",
    "60,603 100,605 115,645 150,640",
    "115,645 110,690 80,730",
    "405,575 430,620 480,660 485,700",
    "585,580 560,570 545,540 500,510",
    "600,550 585,580 560,610 575,630 635,690 635,720",
    "370,605 370,670 400,680 410,730 440,740",
  ].map(west),
  ...[
    "145,130 165,110 205,80 265,85 265,120 280,155 240,155 235,170 187,190",
    "268,100 300,95 350,80 380,75 385,110 370,140 320,145 280,155",
    "235,170 240,210 275,240 278,270",
    "280,155 308,155 312,190 340,195 385,185 440,152 440,120 480,70 540,92 600,95 635,80 665,65 670,95",
    "540,92 535,125 555,150 570,180 625,172 640,145 700,128",
    "625,172 640,215",
    "385,185 390,240 375,275 370,295 325,340",
    "440,152 460,170 455,200 475,230 500,235 520,245 560,255 565,300",
    "375,275 420,290 440,290 450,300 475,285 480,255 475,230",
    "570,180 545,195 530,185 505,195 500,220 510,240",
    "640,215 660,235 720,245 745,272 775,280",
    "640,215 620,240 632,275 620,285 600,300 595,312",
    "632,275 670,295 690,305 715,278 745,272",
    "690,305 692,355 640,380 630,400",
    "560,290 558,395 590,405 630,400",
    "565,300 595,312 620,340 640,380",
    "445,300 448,350 430,375 405,360 375,388",
    "448,350 470,320 495,320 525,325 530,355 558,362",
    "375,388 420,400 470,408 450,430 440,465 400,490 370,500 345,515 302,525",
    "440,465 470,460 480,445 510,435 510,410 540,400 565,415 558,470 545,510 520,505 505,480 485,485 485,450",
    "590,405 565,415",
    "630,400 635,430 650,445 630,480 635,515 650,550 690,535 730,520",
    "630,400 690,410 720,428 778,428",
    "470,460 465,485 435,500 440,510 425,520 440,545 420,570 425,600",
    "345,515 370,530 355,560 380,610 385,645",
    "385,625 425,600 550,598 590,580 630,590 650,550",
    "540,510 535,525 510,525 515,548 545,550 550,575 570,590",
    "630,590 625,630 630,655 670,660 675,685 695,640 730,650 740,578",
    "550,598 545,630 510,655 490,655 490,730",
    "430,720 490,730 530,735 545,745 600,745 595,700 620,655 630,655",
    "600,745 650,750 695,790 705,850 705,885",
    "730,650 755,700 775,715 780,740 765,770 730,790 705,850",
    "780,740 815,715 833,665 860,690 895,710",
    "833,665 888,612",
    "815,715 850,760 860,790 883,820",
    "545,745 540,780 545,830 500,820 445,820",
    "545,830 565,810 610,840 625,875 600,910 570,912 545,910",
    "625,875 680,900 705,885 735,910 738,940",
  ].map(south),
];

// City districts are a dense mesh; each node wanders off its grid position
const cityMesh = () => {
  const node = (i, j) => [
    397 + i * 6 + noise(i + 3, j * 7 + 1) * 6,
    408 + j * 6 + noise(j + 11, i * 5 + 2) * 6,
  ];
  const inside = ([x, y]) =>
    ((x - 435) / 39) ** 2 + ((y - 448) / 27) ** 2 < 1 ||
    (x > 437 && x < 451 && y > 404 && y < 440);
  const lines = [];
  for (let i = 0; i < 14; i++) {
    for (let j = 0; j < 12; j++) {
      const start = node(i, j);
      [node(i + 1, j), node(i, j + 1)].forEach((end, side) => {
        const skipped = noise(i * 3 + side, j + 5) > 0.32;
        if (inside(start) && inside(end) && !skipped) lines.push([start, end]);
      });
    }
  }
  return lines;
};

const landPath = toPath(outline, true);
const borderPath = [...borders, ...cityMesh()]
  .map((line) => toPath(line))
  .join("");

const MapCanvas = () => (
  <MapSvg viewBox="230 111 822 672" role="img" aria-label="LSMD_ADM_SECT_UMD_43">
    <g stroke="#2c250c" strokeWidth="0.9" strokeLinejoin="round">
      <path d={landPath} fill="#e4b434" />
      <path d={borderPath} fill="none" />
      <path d="M444 441l4 11M441 446l9 5M446 440l-1 13" strokeWidth="1.200" />
      <path d="M625 273l6 5M627 272l2 8" strokeWidth="1.200" />
    </g>
  </MapSvg>
);

/* ---------- status bar ---------- */

const StatusBar = styled.footer`
  display: flex;
  align-items: center;
  justify-content: space-between;
  flex: none;
  height: 24px;
  background: #323232;
  font-size: 9px;

  & > label {
    width: 242px;
    padding-left: 9px;
  }
`;

const StatusItems = styled.div`
  display: flex;
  align-items: center;
  gap: 3px;
  padding-right: 16px;

  & label {
    display: flex;
    align-items: center;
    gap: 3px;
  }
`;

const Field = styled.span`
  display: flex;
  width: ${({ $width }) => $width}px;
  height: 17px;
  background: #1c1c1c;

  & input,
  & select {
    appearance: none;
    flex: 1;
    min-width: 0;
    padding: 0 0 0 4px;
    border: 0;
    outline: 0;
    background: none;
  }
`;

const FieldButton = styled.span`
  display: flex;
  flex-direction: column;
  align-items: center;
  justify-content: center;
  gap: 3px;
  width: ${({ $width }) => $width}px;
  border: 1px solid #484848;
  background: #3a3a3a;
`;

const Caret = styled.i`
  border: 3px solid transparent;
  border-${({ $up }) => ($up ? "bottom" : "top")}-color: ${({ $dim }) =>
    $dim ? "#161616" : "#c8c8c8"};
  border-${({ $up }) => ($up ? "top" : "bottom")}: 0;
`;

const Gap = styled.span`
  width: ${({ $width }) => $width}px;
`;

const PlainButton = styled.button`
  display: flex;
  align-items: center;
  gap: 3px;
  padding: 0;
  border: 0;
  background: none;
`;

const Spin = ({ label, width, value }) => (
  <label>
    {label}
    <Field $width={width}>
      <input defaultValue={value} />
      <FieldButton $width={10}>
        <Caret $up />
        <Caret />
      </FieldButton>
    </Field>
  </label>
);

const Status = () => {
  const [rendering, setRendering] = useState(true);

  return (
    <StatusBar>
      <SearchBox $height={19}>
        <Icon name="search" size={10} />
        <input
          aria-label="위치 찾기"
          placeholder="위치를 찾으려면 입력하세요 (⌘K)"
        />
      </SearchBox>
      <StatusItems>
        <label>
          좌표
          <Field $width={77}>
            <input defaultValue="955110,1887193" />
          </Field>
        </label>
        <PlainButton aria-label="extents">
          <Icon name="extents" size={11} />
        </PlainButton>
        <Gap $width={2} />
        <label>
          축척
          <Field $width={71}>
            <select>
              <option>1:937539</option>
            </select>
            <FieldButton $width={14}>
              <Caret $dim />
            </FieldButton>
          </Field>
        </label>
        <Gap $width={2} />
        <PlainButton aria-label="lock">
          <Icon name="lock" size={12} />
        </PlainButton>
        <Spin label="확대경" width={68} value="100%" />
        <Gap $width={1} />
        <Spin label="회전" width={71} value="0.0 °" />
        <label>
          <Tick
            type="checkbox"
            checked={rendering}
            onChange={() => setRendering(!rendering)}
          />
          렌더링
        </label>
        <Gap $width={2} />
        <PlainButton>
          <Icon name="crs" size={11} />알 수 없는 좌표계
        </PlainButton>
        <Gap $width={8} />
        <PlainButton aria-label="messages">
          <Icon name="bubble" size={13} />
        </PlainButton>
      </StatusItems>
    </StatusBar>
  );
};

export default function App() {
  return (
    <Window>
      <GlobalStyle />
      <TitleBar>
        <Lights>
          <Light />
          <Light />
          <Light />
        </Lights>
        <WindowTitle>*제목 없는 프로젝트 — QGIS</WindowTitle>
      </TitleBar>
      <ToolbarRow groups={mainTools} />
      <ToolbarRow groups={layerTools} />
      <ToolbarRow groups={selectionTools} />
      <Workspace>
        <Side>
          <Browser />
          <Splitter />
          <Layers />
        </Side>
        <MapCanvas />
        <Side $right>
          <Toolbox />
        </Side>
      </Workspace>
      <Status />
    </Window>
  );
}
